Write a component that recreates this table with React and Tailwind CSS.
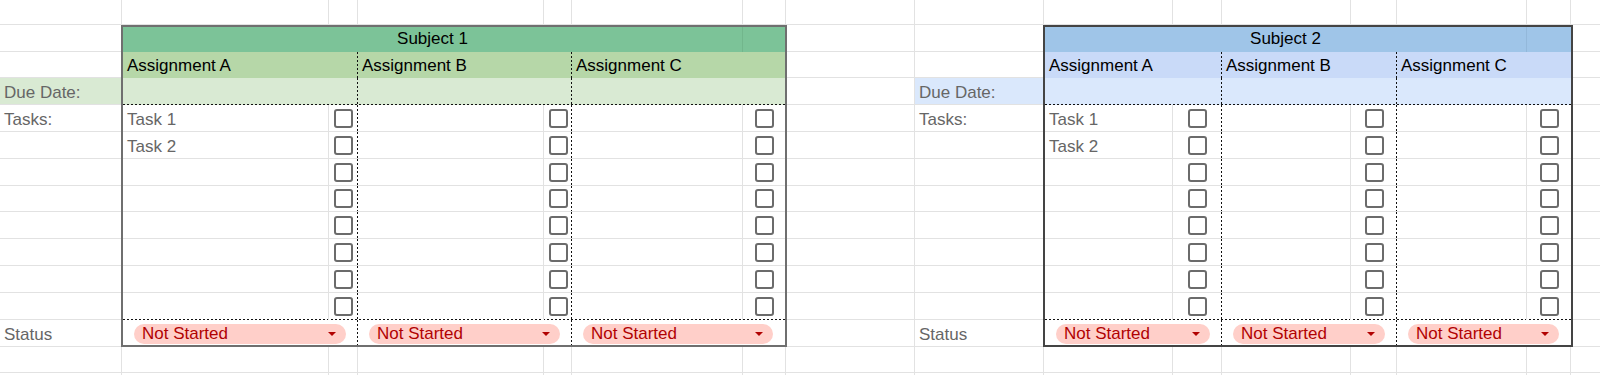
import React from "react";

const FONT = "font-['Liberation_Sans',Arial,sans-serif]";
const GRID_R = "border-r border-r-[#e2e2e2]";
const GRID_B = "border-b border-b-[#e2e2e2]";
// dotted rules drawn as gradients so the dot spacing matches the sheet
const DOT_R =
  "bg-[image:repeating-linear-gradient(to_bottom,#111_0_2px,transparent_2px_4px)] bg-[length:1px_100%] bg-right bg-no-repeat";
const DOT_B =
  "bg-[image:repeating-linear-gradient(to_right,#111_0_2px,transparent_2px_4px)] bg-[length:100%_1px] bg-bottom bg-no-repeat";

const TASK_H = [
  "h-[27px]",
  "h-[27px]",
  "h-[27px]",
  "h-[26px]",
  "h-[27px]",
  "h-[27px]",
  "h-[27px]",
  "h-[27px]",
];

const EDGE_W = [
  "w-[122px]",
  "w-[207px]",
  "w-[29px]",
  "w-[186px]",
  "w-[28px]",
  "w-[171px]",
  "w-[43px]",
  "w-[129px]",
  "w-[129px]",
  "w-[129px]",
  "w-[49px]",
  "w-[129px]",
  "w-[46px]",
  "w-[130px]",
  "w-[44px]",
  "w-[29px]",
];

const green = {
  border: "border-[#6f6f6f]",
  header: "bg-[#7cc398]",
  headerLine: "border-r border-r-[#72b68c]",
  assign: "bg-[#b6d7a8]",
  due: "bg-[#d9ead3]",
};

const blue = {
  border: "border-[#444]",
  header: "bg-[#9fc5e8]",
  headerLine: "border-r border-r-[#93b8da]",
  assign: "bg-[#c9daf8]",
  due: "bg-[#dae8fc]",
};

const W1 = {
  table: "w-[666px]",
  head: "w-[620px]",
  last: "w-[42px]",
  pairs: ["w-[235px]", "w-[214px]", "w-[213px]"],
  cols: ["w-[206px]", "w-[29px]", "w-[186px]", "w-[28px]", "w-[171px]", "w-[42px]"],
};

const W2 = {
  table: "w-[530px]",
  head: "w-[482px]",
  last: "w-[44px]",
  pairs: ["w-[177px]", "w-[175px]", "w-[174px]"],
  cols: ["w-[128px]", "w-[49px]", "w-[129px]", "w-[46px]", "w-[130px]", "w-[44px]"],
};

const Checkbox = () => (
  <div className="h-[19px] w-[19px] rounded-[3px] border-2 border-[#6b6b6b]" />
);

const Chip = () => (
  <div className="flex h-[20px] w-full items-center justify-between rounded-full bg-[#ffcfc9] pl-[8px] pr-[10px] text-[17px] text-[#b10202]">
    <span>Not Started</span>
    <svg width="8" height="4" viewBox="0 0 8 4">
      <polygon points="0,0 8,0 4,4" fill="#b10202" />
    </svg>
  </div>
);

function SubjectTable({ title, t, w, tasks }) {
  return (
    <div className={`flex shrink-0 flex-col border-2 ${t.border} ${w.table}`}>
      <div className="flex h-[25px]">
        <div
          className={`flex shrink-0 items-end justify-center pb-[3px] text-black ${t.header} ${t.headerLine} ${w.head}`}
        >
          {title}
        </div>
        <div className={`shrink-0 ${t.header} ${w.last}`} />
      </div>
      <div className={`flex h-[26px] ${t.assign}`}>
        {["Assignment A", "Assignment B", "Assignment C"].map((a, i) => (
          <div
            key={a}
            className={`flex shrink-0 items-end whitespace-nowrap pb-[2px] pl-[4px] text-black ${
              w.pairs[i]
            } ${i < 2 ? DOT_R : ""}`}
          >
            {a}
          </div>
        ))}
      </div>
      <div className={`flex h-[27px] ${t.due} ${DOT_B}`}>
        {w.pairs.map((p, i) => (
          <div key={i} className={`shrink-0 ${p} ${i < 2 ? DOT_R : ""}`} />
        ))}
      </div>
      {TASK_H.map((h, r) => (
        <div key={r} className={`flex ${h} ${r === 7 ? DOT_B : GRID_B}`}>
          <div
            className={`flex shrink-0 items-end pb-[1px] pl-[4px] text-[#666] ${w.cols[0]} ${GRID_R}`}
          >
            {tasks[r] || ""}
          </div>
          <div className={`flex shrink-0 items-center justify-center ${w.cols[1]} ${DOT_R}`}>
            <Checkbox />
          </div>
          <div className={`shrink-0 ${w.cols[2]} ${GRID_R}`} />
          <div className={`flex shrink-0 items-center justify-center ${w.cols[3]} ${DOT_R}`}>
            <Checkbox />
          </div>
          <div className={`shrink-0 ${w.cols[4]} ${GRID_R}`} />
          <div className={`flex shrink-0 items-center justify-center ${w.cols[5]}`}>
            <Checkbox />
          </div>
        </div>
      ))}
      <div className="flex h-[25px]">
        {w.pairs.map((p, i) => (
          <div
            key={i}
            className={`flex shrink-0 items-end pb-[1px] pl-[11px] pr-[12px] ${p} ${i < 2 ? DOT_R : ""}`}
          >
            <Chip />
          </div>
        ))}
      </div>
    </div>
  );
}

function SideColumn({ w, t, labels, right }) {
  const rows = [
    { h: "h-[27px]", text: "" },
    { h: "h-[26px]", text: "" },
    { h: "h-[27px]", text: labels ? "Due Date:" : "", bg: labels ? t.due : "" },
    ...TASK_H.map((h, i) => ({ h, text: labels && i === 0 ? "Tasks:" : "" })),
    { h: "h-[27px]", text: labels ? "Status" : "" },
  ];
  return (
    <div className={`flex shrink-0 flex-col ${w}`}>
      {rows.map((r, i) => (
        <div
          key={i}
          className={`flex items-end whitespace-nowrap pb-[1px] pl-[4px] text-[#666] ${r.h} ${GRID_B} ${
            r.bg || ""
          } ${right ? GRID_R : ""}`}
        >
          {r.text}
        </div>
      ))}
    </div>
  );
}

function EdgeRow({ h, bottom }) {
  return (
    <div className={`flex ${h} ${bottom ? GRID_B : ""}`}>
      {EDGE_W.map((w, i) => (
        <div
          key={i}
          className={`shrink-0 ${w} ${i < EDGE_W.length - 1 ? GRID_R : ""}`}
        />
      ))}
    </div>
  );
}

const App = () => {
  return (
    <div
      className={`${FONT} h-[375px] w-[1600px] overflow-hidden bg-white text-[17px] leading-[20px]`}
    >
      <EdgeRow h="h-[25px]" bottom />
      <div className="flex">
        <SideColumn w="w-[121px]" t={green} labels />
        <SubjectTable title="Subject 1" t={green} w={W1} tasks={["Task 1", "Task 2"]} />
        <SideColumn w="w-[128px]" right />
        <SideColumn w="w-[128px]" t={blue} labels />
        <SubjectTable title="Subject 2" t={blue} w={W2} tasks={["Task 1", "Task 2"]} />
        <SideColumn w="w-[27px]" />
      </div>
      <EdgeRow h="h-[26px]" bottom />
      <EdgeRow h="h-[10px]" />
    </div>
  );
};

export default App;
